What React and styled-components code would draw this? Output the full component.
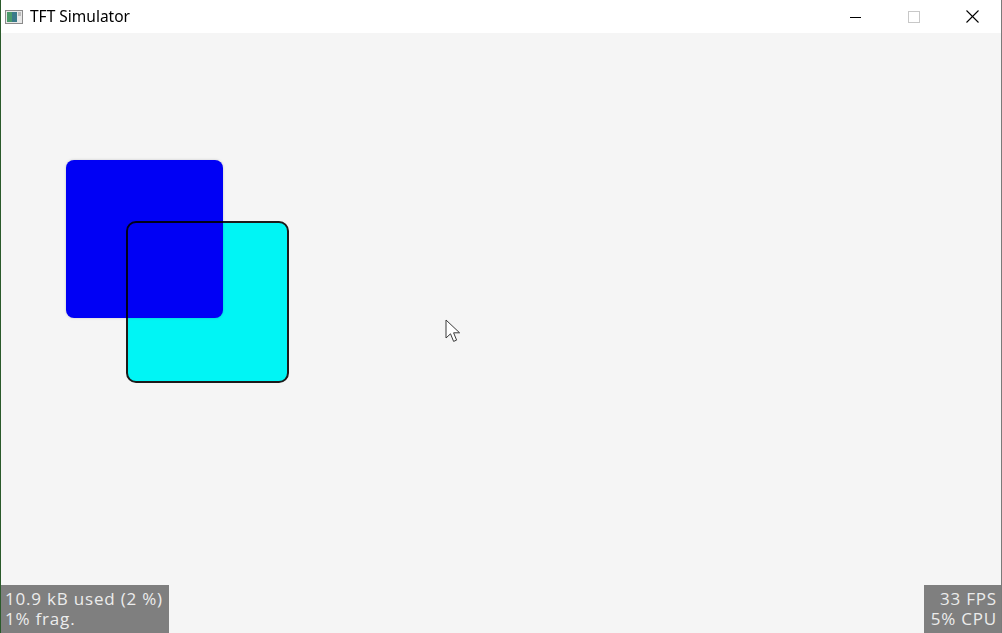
import React from "react";
import styled, { createGlobalStyle } from "styled-components";

const Global = createGlobalStyle`
  html, body { margin: 0; padding: 0; width: 1002px; height: 633px; overflow: hidden; }
  body { font-family: "Noto Sans", sans-serif; }
`;

const Window = styled.div`
  width: 1002px;
  height: 633px;
  display: flex;
  flex-direction: column;
  box-sizing: border-box;
  border-left: 1px solid #2a5a2a;
  border-right: 1px solid #7a7a7a;
  background: #ffffff;
`;

const TitleBar = styled.div`
  height: 33px;
  flex: none;
  display: flex;
  align-items: center;
  background: #ffffff;
`;

const AppIcon = styled.svg`
  margin-left: 4px;
  margin-right: 7px;
  flex: none;
`;

const Title = styled.div`
  font-family: "Noto Sans", "Segoe UI", sans-serif;
  font-size: 15.5px;
  color: #000;
  flex: 1;
  padding-bottom: 1px;
`;

const Controls = styled.div`
  display: flex;
  height: 100%;
`;

const CtrlButton = styled.div`
  width: 58px;
  height: 100%;
  display: flex;
  align-items: center;
  justify-content: center;
`;

const Content = styled.div`
  flex: 1;
  position: relative;
  background: #f5f5f5;
  overflow: hidden;
`;

const BlueBox = styled.div`
  position: absolute;
  left: 65px;
  top: 127px;
  width: 157px;
  height: 158px;
  background: #0000f5;
  border-radius: 8px;
  box-shadow: 0 0 3px rgba(0, 0, 0, 0.18);
`;

const CyanBox = styled.div`
  position: absolute;
  left: 125px;
  top: 188px;
  width: 163px;
  height: 162px;
  box-sizing: border-box;
  background: #00ffff;
  border: 2px solid #1c1c1c;
  border-radius: 10px;
  mix-blend-mode: multiply;
`;

const Stats = styled.div`
  position: absolute;
  bottom: 0;
  ${(p) => (p.$right ? "right: 0; text-align: right;" : "left: 0; text-align: left;")}
  box-sizing: border-box;
  width: ${(p) => (p.$right ? "77px" : "168px")};
  height: 48px;
  background: #7f7f7f;
  color: #ececec;
  font-family: "Open Sans", "Noto Sans", sans-serif;
  font-size: 17px;
  letter-spacing: 0.8px;
  padding: 4px 4px 0 4px;
  white-space: nowrap;
`;

const StatLine = styled.div`
  height: 20px;
  line-height: 20px;
`;

const Cursor = styled.svg`
  position: absolute;
  left: 444px;
  top: 286px;
`;

export default function App() {
  return (
    <>
      <Global />
      <Window>
        <TitleBar>
          <AppIcon width="18" height="14" viewBox="0 0 18 14">
            <rect x="0.5" y="0.5" width="17" height="13" fill="#e8e8e8" stroke="#8a8a8a" />
            <rect x="2" y="2" width="10" height="10" fill="#3a7a8a" />
            <rect x="2" y="2" width="5" height="10" fill="#4a9a6a" />
            <rect x="13" y="2" width="3" height="4" fill="#bbbbbb" />
          </AppIcon>
          <Title>TFT Simulator</Title>
          <Controls>
            <CtrlButton>
              <svg width="12" height="12" viewBox="0 0 12 12">
                <line x1="0" y1="6.5" x2="11" y2="6.5" stroke="#000" strokeWidth="1" />
              </svg>
            </CtrlButton>
            <CtrlButton>
              <svg width="12" height="12" viewBox="0 0 12 12">
                <rect x="0.5" y="0.5" width="11" height="11" fill="none" stroke="#c8c8c8" strokeWidth="1" />
              </svg>
            </CtrlButton>
            <CtrlButton>
              <svg width="13" height="13" viewBox="0 0 13 13">
                <line x1="0.5" y1="0.5" x2="12.5" y2="12.5" stroke="#000" strokeWidth="1.1" />
                <line x1="12.5" y1="0.5" x2="0.5" y2="12.5" stroke="#000" strokeWidth="1.1" />
              </svg>
            </CtrlButton>
          </Controls>
        </TitleBar>
        <Content>
          <BlueBox />
          <CyanBox />
          <Cursor width="18" height="26" viewBox="0 0 18 26">
            <path
              d="M1 1 L1 19 L5.5 14.8 L8.6 22.4 L11.6 21.1 L8.6 13.8 L14.6 13.8 Z"
              fill="#ffffff"
              stroke="#3a3a3a"
              strokeWidth="1"
              strokeLinejoin="round"
            />
          </Cursor>
          <Stats>
            <StatLine>10.9 kB used (2 %)</StatLine>
            <StatLine>1% frag.</StatLine>
          </Stats>
          <Stats $right>
            <StatLine>33 FPS</StatLine>
            <StatLine>5% CPU</StatLine>
          </Stats>
        </Content>
      </Window>
    </>
  );
}
